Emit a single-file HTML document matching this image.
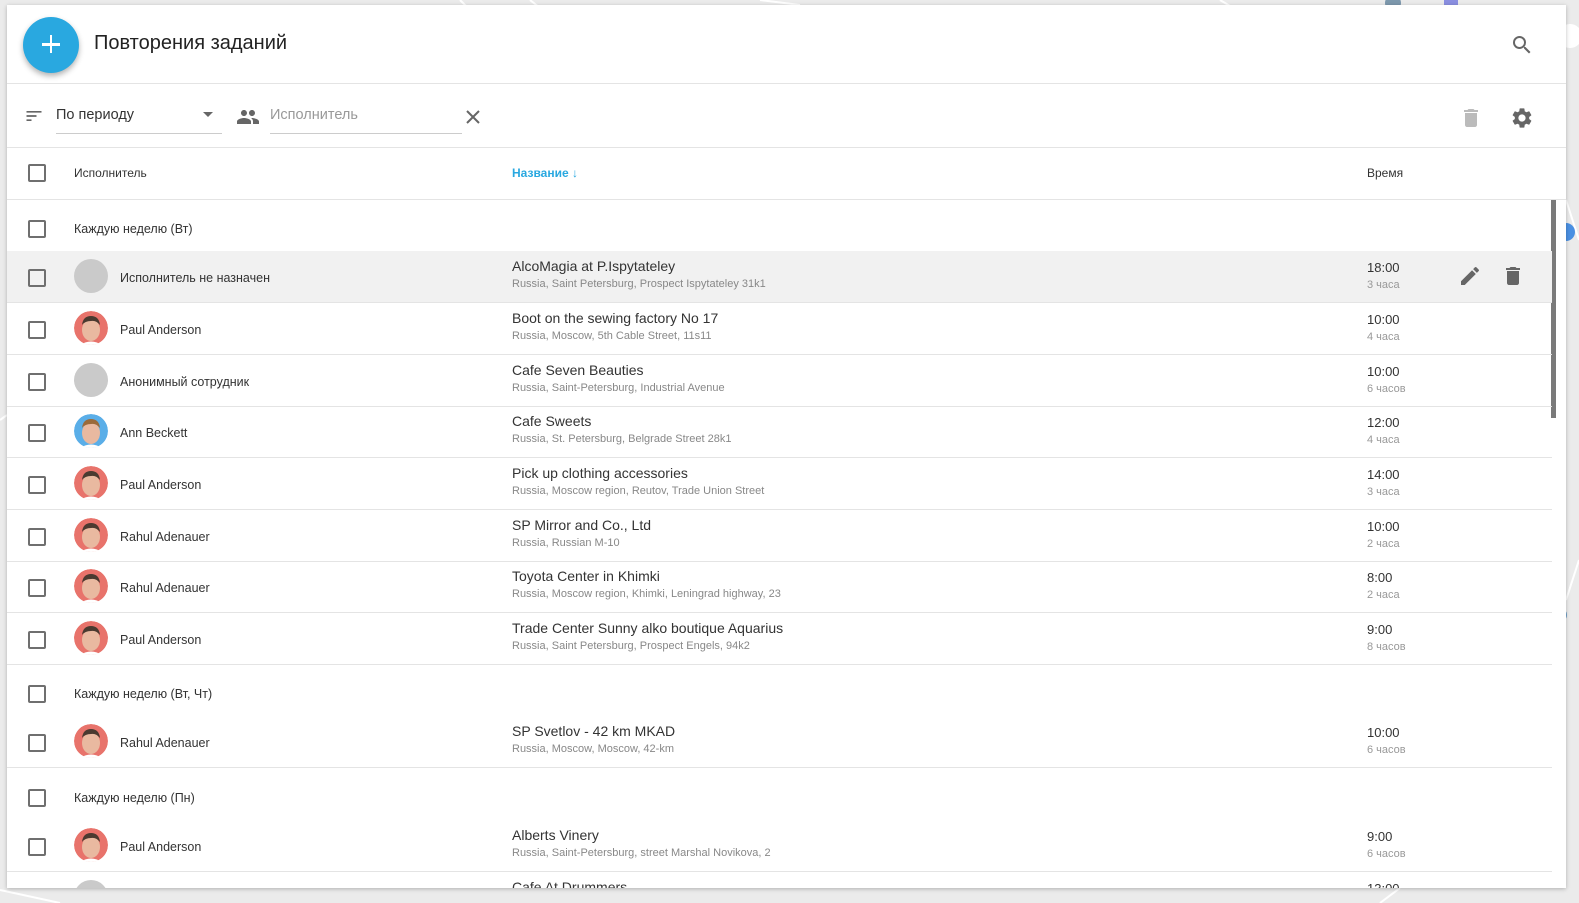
<!DOCTYPE html>
<html><head><meta charset="utf-8"><style>
*{box-sizing:border-box;margin:0;padding:0}
body{width:1579px;height:903px;overflow:hidden;background:#ebebeb;font-family:"Liberation Sans","DejaVu Sans",sans-serif;position:relative}
.panel{position:absolute;left:7px;top:5px;width:1559px;height:883px;background:#fff;box-shadow:0 1px 4px rgba(0,0,0,.25);overflow:hidden}
.a{position:absolute}
.hl{position:absolute;left:0;width:1545px;height:1px;background:#e4e4e4}
.cb{position:absolute;left:21px;width:18px;height:18px;border:2px solid #6f6f6f;border-radius:2px}
.t13{font-size:12.5px;color:#333}
.nm{font-size:14px;color:#333}
.ad{font-size:11px;color:#888}
.tm{font-size:13px;color:#333}
.dur{font-size:11px;color:#999}
.av{position:absolute;left:67px;width:34px;height:34px;border-radius:50%;overflow:hidden}
.gray{background:#cacaca}
</style></head><body>
<svg class="a" style="left:0;top:0" width="1579" height="903"><g stroke="#fff" stroke-width="2" fill="none"><path d="M460 0 L470 10 M530 0 L540 8 M760 0 L800 5 M1220 0 L1230 6"/><path d="M1566 200 L1579 240 M1566 600 L1579 560 M0 420 L7 415 M1380 903 L1400 888 M0 890 L60 903"/></g><circle cx="1393" cy="3" r="8" fill="#7d98ad"/><rect x="1444" y="0" width="14" height="5" fill="#8a8fe0"/><circle cx="1570" cy="36" r="12" fill="#fff"/><circle cx="1566" cy="232" r="9" fill="#4a90e2"/><circle cx="1560" cy="615" r="7" fill="#6fa0c8"/></svg>
<div class="panel">
 <div class="a" style="left:16px;top:12px;width:56px;height:56px;border-radius:50%;background:#29a8e0;box-shadow:0 3px 6px rgba(0,0,0,.3)"></div>
 <div class="a" style="left:35px;top:38px;width:18px;height:2.5px;background:#fff"></div>
 <div class="a" style="left:42.75px;top:30px;width:2.5px;height:18px;background:#fff"></div>
 <div class="a" style="left:87px;top:27px;font-size:20px;color:#222">Повторения заданий</div>
 <svg class="a" style="left:1503px;top:28px" width="24" height="24" viewBox="0 0 24 24"><path fill="#666" d="M15.5 14h-.79l-.28-.27A6.470 6.470 0 0 0 16 9.500 6.500 6.500 0 1 0 9.500 16c1.610 0 3.090-.59 4.230-1.570l.27.28v.79l5 4.990L20.490 19l-4.990-5zm-6 0C7.010 14 5 11.990 5 9.500S7.010 5 9.500 5 14 7.010 14 9.500 11.990 14 9.500 14z"/></svg>
 <div class="hl" style="top:78px;width:1559px"></div>
 <svg class="a" style="left:17px;top:101px" width="20" height="20" viewBox="0 0 24 24"><path fill="#666" d="M3 18h6v-2H3v2zM3 6v2h18V6H3zm0 7h12v-2H3v2z"/></svg>
 <div class="a" style="left:49px;top:102px;font-size:14.5px;color:#333">По периоду</div>
 <svg class="a" style="left:195px;top:106px" width="12" height="8"><path d="M1 1h10L6 6z" fill="#666"/></svg>
 <div class="a" style="left:49px;top:128px;width:166px;height:1px;background:#ccc"></div>
 <svg class="a" style="left:229px;top:100px" width="24" height="24" viewBox="0 0 24 24"><path fill="#666" d="M16 11c1.660 0 2.990-1.340 2.990-3S17.660 5 16 5c-1.660 0-3 1.340-3 3s1.340 3 3 3zm-8 0c1.660 0 2.990-1.340 2.990-3S9.660 5 8 5C6.340 5 5 6.340 5 8s1.340 3 3 3zm0 2c-2.330 0-7 1.170-7 3.500V19h14v-2.500c0-2.330-4.670-3.500-7-3.500zm8 0c-.29 0-.62.02-.97.05 1.160.84 1.970 1.970 1.970 3.450V19h6v-2.500c0-2.330-4.670-3.500-7-3.500z"/></svg>
 <div class="a" style="left:263px;top:102px;font-size:14.5px;color:#999">Исполнитель</div>
 <div class="a" style="left:263px;top:128px;width:192px;height:1px;background:#ccc"></div>
 <svg class="a" style="left:458px;top:104px" width="16" height="16"><path d="M2 2L14 14M14 2L2 14" stroke="#666" stroke-width="2"/></svg>
 <svg class="a" style="left:1452px;top:101px" width="24" height="24" viewBox="0 0 24 24"><path fill="#bbb" d="M6 19c0 1.100.9 2 2 2h8c1.100 0 2-.9 2-2V7H6v12zM19 4h-3.500l-1-1h-5l-1 1H5v2h14V4z"/></svg>
 <svg class="a" style="left:1503px;top:101px" width="24" height="24" viewBox="0 0 24 24"><path fill="#666" d="M19.140 12.940c.04-.3.06-.61.06-.94 0-.32-.02-.64-.07-.94l2.030-1.580a.49.49 0 0 0 .12-.61l-1.920-3.320a.488.488 0 0 0-.59-.22l-2.390.96c-.5-.38-1.030-.7-1.620-.94l-.36-2.540a.484.484 0 0 0-.48-.41h-3.840c-.24 0-.43.17-.47.41l-.36 2.540c-.59.24-1.130.57-1.620.94l-2.390-.96c-.22-.08-.47 0-.59.22L2.740 8.870c-.12.21-.08.47.12.61l2.030 1.580c-.05.3-.09.63-.09.94s.02.64.07.94l-2.030 1.580a.49.49 0 0 0-.12.61l1.920 3.320c.12.22.37.29.59.22l2.390-.96c.5.38 1.030.7 1.620.94l.36 2.540c.05.24.24.41.48.41h3.840c.24 0 .44-.17.47-.41l.36-2.540c.59-.24 1.130-.56 1.620-.94l2.390.96c.22.08.47 0 .59-.22l1.920-3.320c.12-.22.07-.47-.12-.61l-2.010-1.580zM12 15.600c-1.980 0-3.600-1.620-3.600-3.600s1.620-3.600 3.600-3.600 3.600 1.620 3.600 3.600-1.620 3.600-3.600 3.600z"/></svg>
 <div class="hl" style="top:142px;width:1559px"></div>
 <div class="cb" style="top:159px"></div>
 <div class="a t13" style="left:67px;top:161px;font-size:12px">Исполнитель</div>
 <div class="a" style="left:505px;top:161px;font-size:12px;color:#29a8e0;font-weight:bold">Название ↓</div>
 <div class="a t13" style="left:1360px;top:161px;font-size:12px">Время</div>
 <div class="hl" style="top:194px;width:1559px"></div>
 <div class="a" style="left:1544px;top:195px;width:5px;height:218px;background:#7a7a7a"></div>
 <div id="rows"></div>
</div>
<script>
const P='salmon',G='gray',B='blue';
const rows=[
['g',222,'Каждую неделю (Вт)'],
['r',271,G,'Исполнитель не назначен','AlcoMagia at P.Ispytateley','Russia, Saint Petersburg, Prospect Ispytateley 31k1','18:00','3 часа',1],
['r',323,P,'Paul Anderson','Boot on the sewing factory No 17','Russia, Moscow, 5th Cable Street, 11s11','10:00','4 часа'],
['r',375,G,'Анонимный сотрудник','Cafe Seven Beauties','Russia, Saint-Petersburg, Industrial Avenue','10:00','6 часов'],
['r',426,B,'Ann Beckett','Cafe Sweets','Russia, St. Petersburg, Belgrade Street 28k1','12:00','4 часа'],
['r',478,P,'Paul Anderson','Pick up clothing accessories','Russia, Moscow region, Reutov, Trade Union Street','14:00','3 часа'],
['r',530,P,'Rahul Adenauer','SP Mirror and Co., Ltd','Russia, Russian M-10','10:00','2 часа'],
['r',581,P,'Rahul Adenauer','Toyota Center in Khimki','Russia, Moscow region, Khimki, Leningrad highway, 23','8:00','2 часа'],
['r',633,P,'Paul Anderson','Trade Center Sunny alko boutique Aquarius','Russia, Saint Petersburg, Prospect Engels, 94k2','9:00','8 часов'],
['g',687,'Каждую неделю (Вт, Чт)'],
['r',736,P,'Rahul Adenauer','SP Svetlov - 42 km MKAD','Russia, Moscow, Moscow, 42-km','10:00','6 часов'],
['g',791,'Каждую неделю (Пн)'],
['r',840,P,'Paul Anderson','Alberts Vinery','Russia, Saint-Petersburg, street Marshal Novikova, 2','9:00','6 часов'],
['r',892,G,'','Cafe At Drummers','','13:00','']
];
function face(c){
 if(c==G)return '<div class="av gray" style="top:T"></div>';
 const bg=c==B?'#5aaee8':'#e8736b';
 return `<svg class="av" style="top:T" width="34" height="34"><circle cx="17" cy="17" r="17" fill="${bg}"/><ellipse cx="17" cy="19" rx="9" ry="11" fill="#e9b9a0"/><path d="M8 14 Q9 5 17 5 Q25 5 26 14 Q22 9 17 10 Q11 10 8 14z" fill="${c==B?'#9a6a3a':'#4a3a30'}"/><path d="M6 34 Q17 27 28 34z" fill="#fff"/></svg>`;
}
let h='';
for(const r of rows){
 if(r[0]=='g'){const y=r[1];
  h+=`<div class="cb" style="top:${y-7}px"></div><div class="a t13" style="left:67px;top:${y-5}px">${r[2]}</div>`;
  continue;}
 const y=r[1];
 if(r[8])h+=`<div class="a" style="left:0;top:${y-25}px;width:1545px;height:51px;background:#f1f1f1"></div>`;
 h+=`<div class="cb" style="top:${y-7}px"></div>`+face(r[2]).replace('top:T',`top:${y-17}px`);
 h+=`<div class="a t13" style="left:113px;top:${y-5}px">${r[3]}</div>`;
 h+=`<div class="a nm" style="left:505px;top:${y-18}px">${r[4]}</div><div class="a ad" style="left:505px;top:${y+2}px">${r[5]}</div>`;
 h+=`<div class="a tm" style="left:1360px;top:${y-16}px">${r[6]}</div><div class="a dur" style="left:1360px;top:${y+3}px">${r[7]}</div>`;
 if(r[8])h+=`<svg class="a" style="left:1451px;top:${y-12}px" width="24" height="24" viewBox="0 0 24 24"><path fill="#666" d="M3 17.250V21h3.750L17.810 9.940l-3.750-3.750L3 17.250zM20.710 7.040a1 1 0 0 0 0-1.410l-2.340-2.340a1 1 0 0 0-1.410 0l-1.830 1.830 3.750 3.750 1.830-1.830z"/></svg><svg class="a" style="left:1494px;top:${y-12}px" width="24" height="24" viewBox="0 0 24 24"><path fill="#666" d="M6 19c0 1.100.9 2 2 2h8c1.100 0 2-.9 2-2V7H6v12zM19 4h-3.500l-1-1h-5l-1 1H5v2h14V4z"/></svg>`;
 h+=`<div class="hl" style="top:${y+26}px"></div>`;
}
document.getElementById('rows').outerHTML=h;
</script>
</body></html>
